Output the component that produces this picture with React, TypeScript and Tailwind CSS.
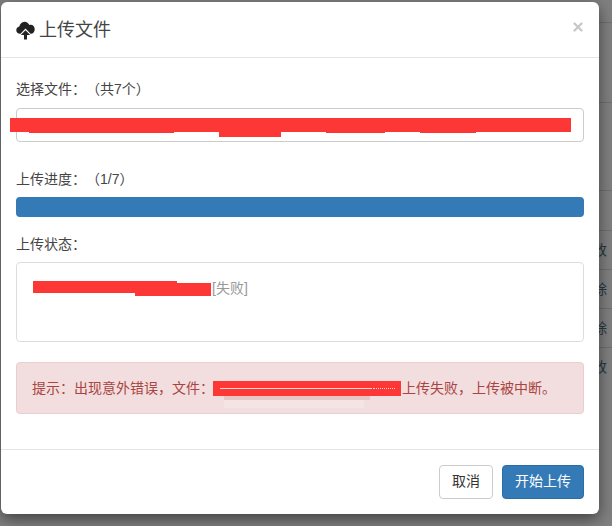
import { X } from "lucide-react";

const CloudUpload = () => (
  <svg viewBox="0 0 20 19" className="w-[19px] h-[19px] shrink-0 mt-[2px]" fill="#222">
    <path d="M4.800 13H4.200C2 13 .3 11.300 .3 9.200c0-2 1.400-3.500 3.200-3.800C4 2.700 6.200 .4 9 .4c2.300 0 4.200 1.400 5 3.400.5-.2 1-.3 1.500-.3 2.400 0 4.200 2.100 4.200 4.800S18 13 15.800 13h-.6L10 7.500 4.800 13z" />
    <path d="M10 9.200 15 14.200H11.600V19H8.400V14.200H5L10 9.200z" />
  </svg>
);

const rows = [
  { top: 22, h: 80, label: "" },
  { top: 102, h: 88, label: "" },
  { top: 190, h: 40, label: "" },
  { top: 230, h: 39, label: "改" },
  { top: 269, h: 39, label: "除" },
  { top: 308, h: 39, label: "除" },
  { top: 347, h: 40, label: "改" },
];

export default function App() {
  return (
    <div className="w-[612px] h-[526px] overflow-hidden flex bg-[#808080] font-['Liberation_Sans','Noto_Sans_CJK_SC',sans-serif] text-[14px] text-[#444] [text-spacing-trim:space-all]">
      <div className="w-[598px] h-[512px] ml-px mt-[2px] shrink-0 flex flex-col bg-white rounded-[6px] shadow-[0_5px_15px_rgba(0,0,0,0.5)] relative z-10">
        {/* Header */}
        <div className="h-[56px] shrink-0 border-b border-[#e5e5e5] flex items-center justify-between pl-[15px] pr-[14px]">
          <div className="flex items-center gap-[4px] text-[18px] leading-[24px] text-[#444]">
            <CloudUpload />
            <span>上传文件</span>
          </div>
          <X className="w-[14px] h-[14px] text-[#c8c8c8] mb-[5px]" strokeWidth={4} />
        </div>

        {/* Body */}
        <div className="flex-1 px-[15px] flex flex-col">
          <div className="mt-[21px] h-[20px] leading-[20px]">选择文件：（共7个）</div>
          <div className="relative mt-[9px] h-[34px] border border-[#ccc] rounded-[4px] bg-white">
            <div className="absolute left-[-7px] top-[9px] w-[561px] h-[14px] bg-[#fd3636]" />
            <div className="absolute left-[12px] top-[23px] w-[145px] h-px bg-[#fd3636]" />
            <div className="absolute left-[202px] top-[23px] w-[62px] h-[5px] bg-[#fd3636]" />
            <div className="absolute left-[309px] top-[23px] w-[59px] h-px bg-[#fd3636]" />
            <div className="absolute left-[403px] top-[23px] w-[56px] h-px bg-[#fd3636]" />
          </div>

          <div className="mt-[27px] h-[20px] leading-[20px]">上传进度：（1/7）</div>
          <div className="mt-[8px] h-[20px] rounded-[4px] bg-[#337ab7]" />

          <div className="mt-[17px] h-[20px] leading-[20px]">上传状态：</div>
          <div className="relative mt-[8px] h-[80px] border border-[#ddd] rounded-[4px] bg-white pl-[195px] pt-[15px] leading-[20px] text-[#999]">
            <div className="absolute left-[16px] top-[18px] w-[144px] h-[12px] bg-[#fd3636]" />
            <div className="absolute left-[118px] top-[20px] w-[76px] h-[13px] bg-[#fd3636]" />
            [失败]
          </div>

          <div className="mt-[20px] h-[52px] border border-[#ebccd1] rounded-[4px] bg-[#f2dede] text-[#a94442] flex items-center pl-[15px] leading-[20px] whitespace-nowrap">
            <span>提示：出现意外错误，文件：</span>
            <span className="relative w-[188px] h-[15px] bg-[#fd3636] -ml-px mr-px shrink-0">
              <span className="absolute left-[7px] w-[152px] top-[7px] h-px bg-[#ffd6d6]" />
              <span className="absolute left-[160px] w-[22px] top-[7px] h-px border-t border-dotted border-[#ffd6d6]" />
              <span className="absolute left-[11px] top-[15px] w-[146px] h-[4px] bg-[#e9c6c6]" />
              <span className="absolute left-[11px] top-[19px] w-[140px] h-[8px] bg-[#f5e4e4]" />
            </span>
            <span>上传失败，上传被中断。</span>
          </div>
        </div>

        {/* Footer */}
        <div className="h-[65px] shrink-0 border-t border-[#e5e5e5] flex items-center justify-end gap-[9px] pr-[15px] pb-px">
          <button className="w-[54px] h-[34px] border border-[#ccc] rounded-[4px] bg-white text-[#333]">取消</button>
          <button className="w-[82px] h-[34px] border border-[#2e6da4] rounded-[4px] bg-[#337ab7] text-white">开始上传</button>
        </div>
      </div>

      {/* Page behind the backdrop */}
      <div className="flex-1 -ml-[6px] pt-[22px] flex flex-col text-[14px] text-[#2b3a40]">
        {rows.map((r) => (
          <div
            key={r.top}
            className="border-t border-[#6f6f6f] flex items-center whitespace-nowrap overflow-hidden"
            style={{ height: r.h }}
          >
            {r.label}
          </div>
        ))}
      </div>
    </div>
  );
}
